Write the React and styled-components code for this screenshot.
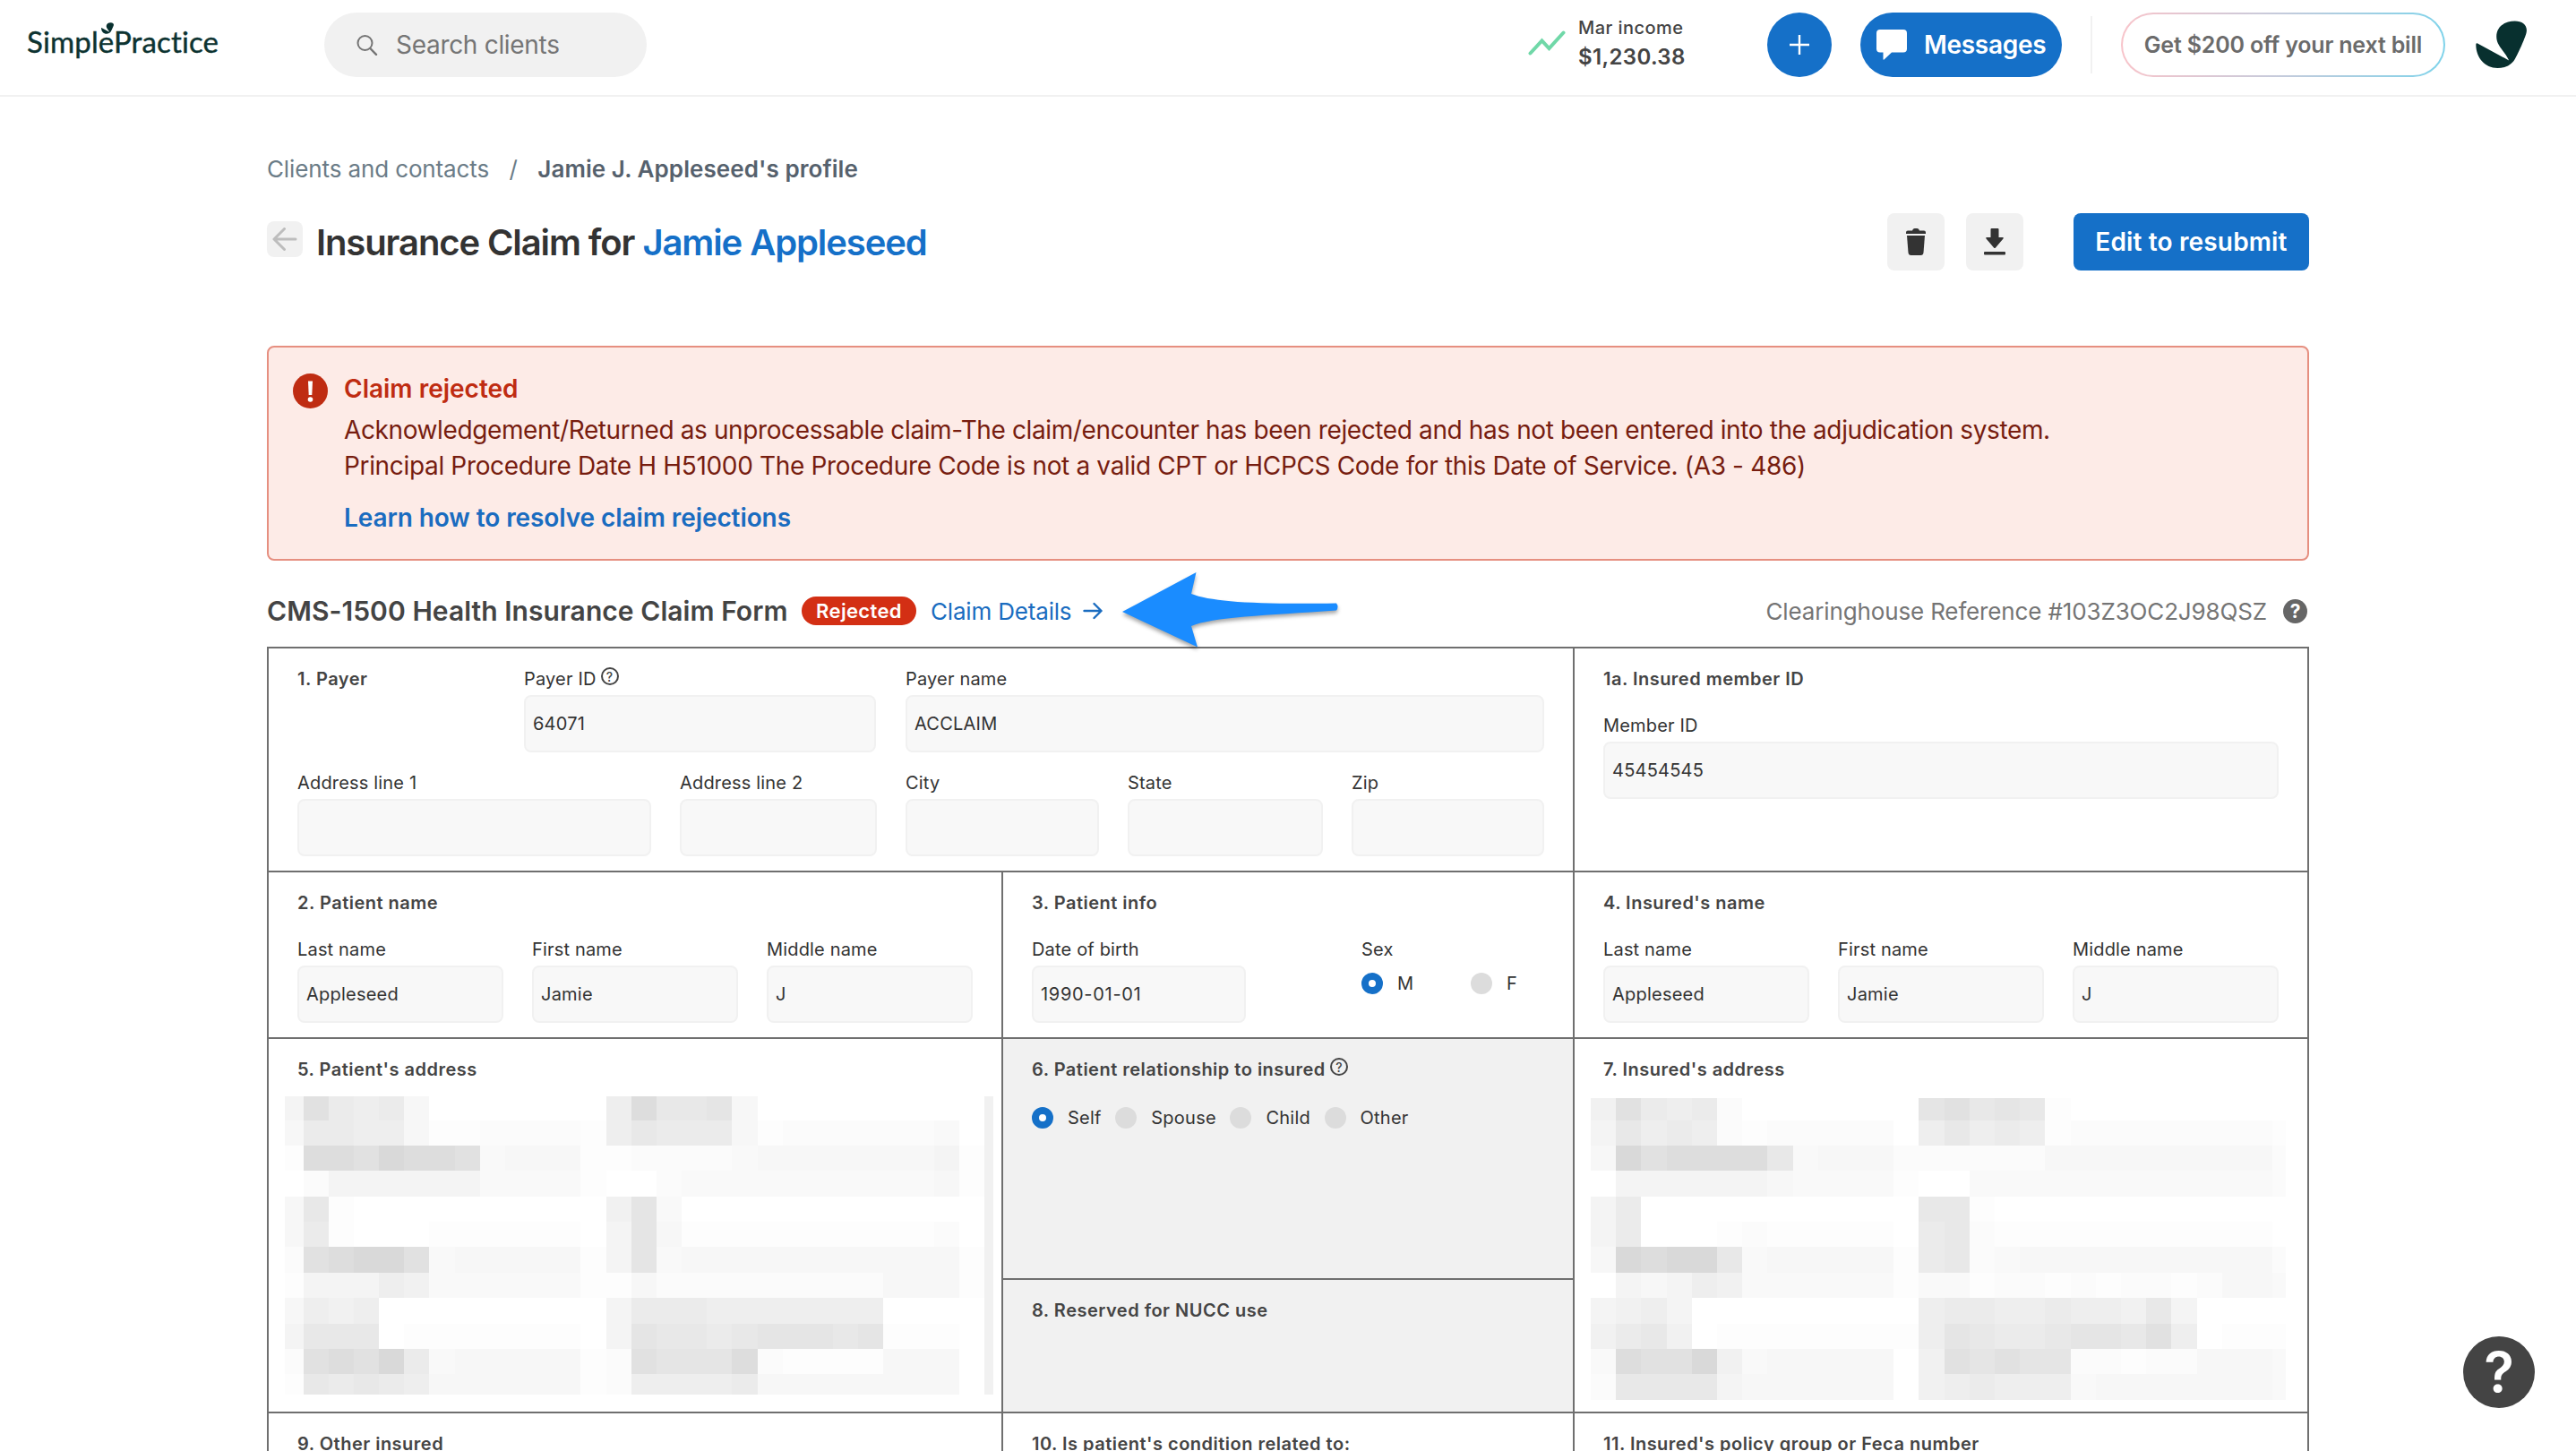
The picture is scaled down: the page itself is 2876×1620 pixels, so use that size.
import React from 'react'
import styled, { createGlobalStyle } from 'styled-components'

const patientAddress = [
  "ekhghd.......gliijd.........f",
  "dhhggdaabbbbagihhhdabbbbbbc.f",
  "allkmllkcdddaabbbbcdddddddeaf",
  ".beeeeeecccca..bccccccccccdaf",
  "dia..........fjc............f",
  "dha...aaaaaa.ejdaaaaaaaaaab.f",
  "bklmmkcdddddaejcdddddddddddaf",
  "aeeegfccccccaadbbbbbbbbbdddaf",
  "dgfg.........ehhhggggggg....f",
  "eiii.aaaaaaa.ejiihijjjijaaa.f",
  "bklkmhcdddddabkjjjlbaaaaddd.f",
  "aihihgddddddabgggghdddddddd.f",
];

const insuredAddress = [
  "fkhghb.......jkijia.........",
  "eighgbabbbbb.gighgabbbbbbbba",
  "dmkllllicdddbbbbbbdddddddddb",
  ".eeeeeedcccca..ccccccccccccb",
  "eh...........iia............",
  "eh...abaaaaa.hibaaaaaaaaaaa.",
  "dmlmmicdddddahibcddddddddddb",
  ".edegfccccccaccabbababbabddc",
  "efge.........ghhgghggfie....",
  "fhif.aaaaaaaagjihhijjikg.aaa",
  "clkkmfcddddd.fkjkjjbbabbdddc",
  "biiiiedddddd.fghgggcdddddddc",
];

const tones = {
  ".": "#ffffff",
  a: "#fdfdfd",
  b: "#fbfbfb",
  c: "#f9f9f9",
  d: "#f7f7f7",
  e: "#f4f4f4",
  f: "#f1f1f1",
  g: "#eeeeee",
  h: "#ebebeb",
  i: "#e8e8e8",
  j: "#e5e5e5",
  k: "#e1e1e1",
  l: "#dddddd",
  m: "#d9d9d9",
};

const Field = ({ label, value, help, track }) => {
  return (
    <div>
      <Label>
        {label}
        {help && <HelpRing />}
      </Label>
      <Input $track={track}>{value}</Input>
    </div>
  );
}

const HelpRing = () => {
  return <Ring>?</Ring>;
}

const Option = ({ label, checked, width }) => {
  return (
    <Choice $width={width}>
      <Radio $checked={checked} />
      {label}
    </Choice>
  );
}

const Redacted = ({ rows, columns, heights, top }) => {
  return (
    <Mosaic $columns={columns} $heights={heights} $top={top}>
      {rows.map((row, y) =>
        row.split("").map((tone, x) => <Tile key={`${y}-${x}`} $tone={tones[tone]} />)
      )}
    </Mosaic>
  );
}

const Leaf = ({ width, height }) => {
  return (
    <svg width={width} height={height} viewBox="0 0 56 54" preserveAspectRatio="none">
      <path
        fill="#08302f"
        d="M36.5 44.5C31 33 22.8 28 22.8 18C22.8 7 31 .6 43 .6C52 .6 57.5 6 55.5 14C54 20 46 38 43 43C39 50 32 53 24 53C10 53 .3 41 .3 27C.3 25 1.5 25 3 26Z"
      />
    </svg>
  );
}

const Header = () => {
  return (
    <Bar>
      <Logo>
        SimplePractice
        <LogoLeaf><Leaf width={14} height={13} /></LogoLeaf>
      </Logo>
      <Search>
        <svg width="24" height="24" viewBox="0 0 24 24" fill="none" stroke="#757575" strokeWidth="2">
          <circle cx="9.5" cy="10" r="8" />
          <path d="M15.3 16L22 22.8" strokeWidth="2.4" strokeLinecap="round" />
        </svg>
        Search clients
      </Search>
      <Tools>
        <Income>
          <svg width="42" height="28" viewBox="0 0 42 28" fill="none" stroke="#70d8a8" strokeWidth="4">
            <path d="M2.500 25.500L15.500 11.500L23.500 20L39.500 2.500" strokeLinejoin="miter" strokeLinecap="round" />
          </svg>
          <div>
            <Month>Mar income</Month>
            <Amount>$1,230.38</Amount>
          </div>
        </Income>
        <AddButton>
          <svg width="22" height="22" viewBox="0 0 22 22" stroke="#fff" strokeWidth="2.4">
            <path d="M11 0V22M0 11H22" />
          </svg>
        </AddButton>
        <Messages>
          <svg width="34" height="34" viewBox="0 0 34 34" fill="#fff">
            <path d="M4 0H30Q34 0 34 4V21.500Q34 25.500 30 25.500H17L8.500 33.500Q7.500 34 7.500 33V25.500H4Q0 25.500 0 21.500V4Q0 0 4 0Z" />
          </svg>
          Messages
        </Messages>
        <Divider />
        <Offer>Get $200 off your next bill</Offer>
        <Leaf width={57} height={54} />
      </Tools>
    </Bar>
  );
}

const App = () => {
  return (
    <Page>
      <GlobalStyle />
      <Header />
      <Main>
        <Crumbs>
          <span>Clients and contacts</span>
          <span>/</span>
          <b>Jamie J. Appleseed's profile</b>
        </Crumbs>

        <TitleRow>
          <Back>
            <svg width="28" height="26" viewBox="0 0 28 26" fill="none" stroke="#bdbdbd" strokeWidth="3" strokeLinecap="round" strokeLinejoin="round">
              <path d="M26 13H2M13.500 1.500L2 13L13.500 24.500" />
            </svg>
          </Back>
          <h1>
            Insurance Claim for <span>Jamie Appleseed</span>
          </h1>
          <Actions>
            <IconButton>
              <svg width="24" height="30" viewBox="0 0 24 30" fill="#333">
                <path d="M8 2.500Q8.500 0 10.500 0H13.500Q15.500 0 16 2.500H21Q23 2.500 23 4.500V6H1V4.500Q1 2.500 3 2.500Z" />
                <path d="M2 8H22L20.500 27Q20.200 30 17.500 30H6.500Q3.800 30 3.500 27Z" />
              </svg>
            </IconButton>
            <IconButton>
              <svg width="24" height="30" viewBox="0 0 24 30" fill="#333">
                <path d="M8.500 0H15.500Q16.500 0 16.500 1V10H21Q22.500 10 21.500 11.500L13 21.500Q12 22.500 11 21.500L2.500 11.500Q1.500 10 3 10H7.500V1Q7.500 0 8.500 0Z" />
                <rect x="0" y="26" width="24" height="3.600" rx="1" />
              </svg>
            </IconButton>
            <Primary>Edit to resubmit</Primary>
          </Actions>
        </TitleRow>

        <Alert>
          <svg width="39" height="39" viewBox="0 0 39 39">
            <circle cx="19.5" cy="19.5" r="19.5" fill="#bf2c12" />
            <path d="M17 8.500H22L21.300 24H17.700Z" fill="#fff" />
            <circle cx="19.5" cy="29" r="2.800" fill="#fff" />
          </svg>
          <div>
            <h3>Claim rejected</h3>
            <AlertLine $track={-0.385}>
              Acknowledgement/Returned as unprocessable claim-The claim/encounter has been rejected and has not been entered into the adjudication system.
            </AlertLine>
            <AlertLine $track={-0.34}>
              Principal Procedure Date H H51000 The Procedure Code is not a valid CPT or HCPCS Code for this Date of Service. (A3 - 486)
            </AlertLine>
            <AlertLink>Learn how to resolve claim rejections</AlertLink>
          </div>
        </Alert>

        <FormHead>
          <h2>CMS-1500 Health Insurance Claim Form</h2>
          <Badge>Rejected</Badge>
          <Details>
            Claim Details
            <svg width="22" height="20" viewBox="0 0 22 20" fill="none" stroke="#1a6cc0" strokeWidth="2.400" strokeLinecap="round" strokeLinejoin="round">
              <path d="M1.500 10H20.500M12.500 2L20.500 10L12.500 18" />
            </svg>
          </Details>
          <Reference>
            Clearinghouse Reference #103Z3OC2J98QSZ
            <HelpDot>?</HelpDot>
          </Reference>
          <Pointer>
            <svg width="250" height="100" viewBox="0 0 250 100">
              <path
                fill="#1a8cff"
                d="M0 45L82.500 1L77 25C100 34 150 37 239 35.500Q242 39.500 239 43.500C160 49 100 51 77 61L84 84.500Z"
              />
            </svg>
          </Pointer>
        </FormHead>

        <Form>
          <Cell $span={2}>
            <Fields $columns="220px 393px 713px" $gap={33}>
              <SectionTitle>1. Payer</SectionTitle>
              <Field label="Payer ID" value="64071" help />
              <Field label="Payer name" value="ACCLAIM" />
            </Fields>
            <Fields $columns="395px 220px 216px 218px 215px" $top={22}>
              <Field label="Address line 1" />
              <Field label="Address line 2" />
              <Field label="City" />
              <Field label="State" />
              <Field label="Zip" />
            </Fields>
          </Cell>
          <Cell>
            <SectionTitle>1a. Insured member ID</SectionTitle>
            <Fields $columns="1fr" $top={28}>
              <Field label="Member ID" value="45454545" />
            </Fields>
          </Cell>

          <Cell>
            <SectionTitle>2. Patient name</SectionTitle>
            <Fields $columns="repeat(3, 1fr)" $top={28}>
              <Field label="Last name" value="Appleseed" />
              <Field label="First name" value="Jamie" />
              <Field label="Middle name" value="J" />
            </Fields>
          </Cell>
          <Cell>
            <SectionTitle>3. Patient info</SectionTitle>
            <Fields $columns="239px 1fr" $gap={129} $top={28}>
              <Field label="Date of birth" value="1990-01-01" track={0.7} />
              <div>
                <Label>Sex</Label>
                <Options $top={14} $gap={0}>
                  <Option label="M" width={122} checked />
                  <Option label="F" />
                </Options>
              </div>
            </Fields>
          </Cell>
          <Cell>
            <SectionTitle>4. Insured's name</SectionTitle>
            <Fields $columns="repeat(3, 1fr)" $top={28}>
              <Field label="Last name" value="Appleseed" />
              <Field label="First name" value="Jamie" />
              <Field label="Middle name" value="J" />
            </Fields>
          </Cell>

          <Cell $rows={2}>
            <SectionTitle>5. Patient's address</SectionTitle>
            <Redacted
              rows={patientAddress}
              columns="20.7px repeat(27, 28.17px) 10px"
              heights="26.7px repeat(10, 28.37px) 22.7px"
              top={18}
            />
          </Cell>
          <Cell $muted>
            <SectionTitle>
              6. Patient relationship to insured
              <HelpRing />
            </SectionTitle>
            <Options $top={30} $gap={15.5}>
              <Option label="Self" checked />
              <Option label="Spouse" />
              <Option label="Child" />
              <Option label="Other" />
            </Options>
          </Cell>
          <Cell $rows={2}>
            <SectionTitle>7. Insured's address</SectionTitle>
            <Redacted
              rows={insuredAddress}
              columns="repeat(27, 28.2px) 15px"
              heights="24.7px repeat(10, 28.37px) 28.7px"
              top={20}
            />
          </Cell>
          <Cell $muted>
            <SectionTitle>8. Reserved for NUCC use</SectionTitle>
          </Cell>

          <Cell>
            <SectionTitle>9. Other insured</SectionTitle>
          </Cell>
          <Cell>
            <SectionTitle>10. Is patient's condition related to:</SectionTitle>
          </Cell>
          <Cell>
            <SectionTitle>11. Insured's policy group or Feca number</SectionTitle>
          </Cell>
        </Form>
      </Main>
      <HelpButton>?</HelpButton>
    </Page>
  );
}

const GlobalStyle = createGlobalStyle`
  * {
    box-sizing: border-box;
  }
  body {
    margin: 0;
    background: #fff;
    font-family: Inter, "Liberation Sans", sans-serif;
  }
  h1, h2, h3 {
    margin: 0;
    font-weight: 600;
  }
  svg {
    display: block;
    flex-shrink: 0;
  }
`;

const Page = styled.div`
  position: relative;
  width: 2876px;
  height: 1620px;
  overflow: hidden;
`;

const Bar = styled.header`
  display: flex;
  align-items: center;
  height: 108px;
  padding: 0 55px 6px 30px;
  border-bottom: 2px solid #f1f1f1;
`;

const Logo = styled.div`
  position: relative;
  width: 332px;
  padding-bottom: 8px;
  font-family: Lato, sans-serif;
  font-size: 33px;
  letter-spacing: 0.15px;
  line-height: 40px;
  color: #0d3331;
  -webkit-text-stroke: 0.4px #0d3331;
`;

const LogoLeaf = styled.span`
  position: absolute;
  left: 83px;
  top: -1px;
`;

const Search = styled.div`
  display: flex;
  align-items: center;
  gap: 20px;
  width: 360px;
  height: 72px;
  padding-left: 36px;
  border-radius: 36px;
  background: #f1f1f1;
  color: #757575;
  font-size: 28px;
  letter-spacing: -0.3px;
`;

const Tools = styled.div`
  display: flex;
  align-items: center;
  margin-left: auto;
`;

const Income = styled.div`
  display: flex;
  align-items: center;
  gap: 14px;
  width: 267px;
  padding-bottom: 4px;
  color: #444;
`;

const Month = styled.div`
  font-size: 20px;
  font-weight: 500;
  line-height: 32px;
  letter-spacing: 0.45px;
`;

const Amount = styled.div`
  font-size: 24px;
  font-weight: 600;
  line-height: 34px;
  letter-spacing: 0.35px;
`;

const AddButton = styled.div`
  display: flex;
  align-items: center;
  justify-content: center;
  width: 72px;
  height: 72px;
  border-radius: 50%;
  background: #1570c8;
`;

const Messages = styled.div`
  display: flex;
  align-items: center;
  gap: 19px;
  width: 225px;
  height: 72px;
  margin-left: 32px;
  padding-left: 18px;
  border-radius: 36px;
  background: #1570c8;
  color: #fff;
  font-size: 28px;
  font-weight: 600;
  letter-spacing: -0.3px;
`;

const Divider = styled.div`
  width: 2px;
  height: 64px;
  margin: 0 32px;
  background: #f1f1f1;
`;

const Offer = styled.div`
  display: flex;
  align-items: center;
  justify-content: center;
  width: 362px;
  height: 72px;
  margin-right: 34px;
  border: 2px solid transparent;
  border-radius: 36px;
  background:
    linear-gradient(#fff, #fff) padding-box,
    linear-gradient(90deg, #f8c4ca, #c4cbdc 50%, #7fd3ea) border-box;
  color: #6b6b6b;
  font-size: 25px;
  font-weight: 600;
  letter-spacing: -0.18px;
`;

const Main = styled.main`
  width: 2280px;
  margin: 0 298px;
  padding-top: 65px;
`;

const Crumbs = styled.nav`
  display: flex;
  gap: 22.5px;
  font-size: 26px;
  line-height: 32px;
  letter-spacing: -0.12px;
  color: #6b7c87;
  b {
    font-weight: 600;
    letter-spacing: 0.07px;
    color: #56616d;
  }
`;

const TitleRow = styled.div`
  display: flex;
  align-items: center;
  height: 64px;
  margin-top: 33px;
  h1 {
    margin-left: 15px;
    font-size: 40px;
    letter-spacing: -1.1px;
    color: #333;
  }
  h1 span {
    color: #1570c8;
  }
`;

const Back = styled.div`
  display: flex;
  align-items: center;
  justify-content: center;
  width: 40px;
  height: 40px;
  margin-bottom: 6px;
  border-radius: 8px;
  background: #f1f1f1;
`;

const Actions = styled.div`
  display: flex;
  margin-left: auto;
`;

const IconButton = styled.div`
  display: flex;
  align-items: center;
  justify-content: center;
  width: 64px;
  height: 64px;
  margin-right: 24px;
  border-radius: 8px;
  background: #f1f1f1;
`;

const Primary = styled.div`
  width: 263px;
  height: 64px;
  margin-left: 32px;
  border-radius: 8px;
  background: #1570c8;
  color: #fff;
  font-size: 28px;
  font-weight: 600;
  line-height: 64px;
  letter-spacing: 0.15px;
  text-align: center;
`;

const Alert = styled.section`
  display: flex;
  gap: 18px;
  height: 240px;
  margin-top: 84px;
  padding: 26px 0 0 27px;
  border: 2px solid #e68f80;
  border-radius: 8px;
  background: #fdebe7;
  font-size: 28px;
  line-height: 40px;
  svg {
    margin-top: 3px;
  }
  h3 {
    margin-bottom: 6px;
    font-size: 28px;
    color: #bf2c12;
  }
`;

const AlertLine = styled.div`
  color: #771d10;
  white-space: nowrap;
  letter-spacing: ${(p) => p.$track}px;
`;

const AlertLink = styled.div`
  margin-top: 18px;
  font-weight: 600;
  letter-spacing: -0.09px;
  color: #1a6cc0;
`;

const FormHead = styled.div`
  position: relative;
  display: flex;
  align-items: center;
  height: 32px;
  margin: 40px 0 24px;
  h2 {
    width: 597px;
    font-size: 30px;
    letter-spacing: 0.05px;
    white-space: nowrap;
    color: #444;
  }
`;

const Badge = styled.div`
  width: 128px;
  height: 32px;
  border-radius: 16px;
  background: #d32f14;
  color: #fff;
  font-size: 22px;
  font-weight: 600;
  line-height: 32px;
  letter-spacing: 0.35px;
  text-align: center;
`;

const Details = styled.div`
  display: flex;
  align-items: center;
  gap: 13px;
  margin-left: 16px;
  font-size: 26px;
  letter-spacing: -0.18px;
  color: #1a6cc0;
`;

const Reference = styled.div`
  display: flex;
  align-items: center;
  gap: 18px;
  margin-left: auto;
  padding-right: 2px;
  font-size: 26px;
  letter-spacing: -0.14px;
  color: #757575;
`;

const HelpDot = styled.span`
  width: 27px;
  height: 27px;
  border-radius: 50%;
  background: #666;
  color: #fff;
  font-size: 21px;
  font-weight: 700;
  line-height: 27px;
  text-align: center;
`;

const Pointer = styled.div`
  position: absolute;
  left: 955px;
  top: -28px;
  z-index: 1;
  filter: drop-shadow(0 3px 2px rgba(0, 0, 0, 0.35));
`;

const Form = styled.div`
  display: grid;
  grid-template-columns: 818px 636px 818px;
  grid-template-rows: 248px 184px 267px 147px 200px;
  gap: 2px;
  border: 2px solid #6f6f6f;
  background: #6f6f6f;
`;

const Cell = styled.div`
  grid-column: span ${(p) => p.$span || 1};
  grid-row: span ${(p) => p.$rows || 1};
  padding: 22px 32px 0;
  background: ${(p) => (p.$muted ? "#f1f1f1" : "#fff")};
`;

const Fields = styled.div`
  display: grid;
  grid-template-columns: ${(p) => p.$columns};
  column-gap: ${(p) => p.$gap || 32}px;
  margin-top: ${(p) => p.$top || 0}px;
`;

const SectionTitle = styled.div`
  display: flex;
  font-size: 20px;
  font-weight: 600;
  line-height: 24px;
  letter-spacing: 0.49px;
  color: #444;
`;

const Label = styled.div`
  display: flex;
  font-size: 20px;
  line-height: 24px;
  letter-spacing: 0.17px;
  color: #333;
`;

const Input = styled.div`
  height: 64px;
  margin-top: 6px;
  padding-left: 8px;
  border: 2px solid #f1f1f1;
  border-radius: 8px;
  background: #f8f8f8;
  color: #333;
  font-size: 20px;
  line-height: 60px;
  letter-spacing: ${(p) => p.$track || 0.22}px;
`;

const Ring = styled.span`
  width: 20px;
  height: 20px;
  margin: -1px 0 0 5px;
  border: 2px solid #444;
  border-radius: 50%;
  font-size: 14px;
  font-weight: 500;
  line-height: 17px;
  letter-spacing: 0;
  text-align: center;
  color: #444;
`;

const Options = styled.div`
  display: flex;
  gap: ${(p) => p.$gap}px;
  margin-top: ${(p) => p.$top}px;
`;

const Choice = styled.div`
  display: flex;
  align-items: center;
  gap: 16px;
  width: ${(p) => (p.$width ? `${p.$width}px` : "auto")};
  font-size: 20px;
  line-height: 24px;
  letter-spacing: 0.25px;
  color: #333;
`;

const Radio = styled.span`
  width: 24px;
  height: 24px;
  border-radius: 50%;
  border: ${(p) => (p.$checked ? "8px solid #1570c8" : "0")};
  background: ${(p) => (p.$checked ? "#fff" : "#dcdcdc")};
`;

const Mosaic = styled.div`
  display: grid;
  grid-template-columns: ${(p) => p.$columns};
  grid-template-rows: ${(p) => p.$heights};
  margin: ${(p) => p.$top}px 0 0 -14px;
`;

const Tile = styled.span`
  background: ${(p) => p.$tone};
`;

const HelpButton = styled.div`
  position: absolute;
  left: 2750px;
  top: 1492px;
  width: 80px;
  height: 80px;
  border-radius: 50%;
  background: #444;
  color: #fff;
  font-size: 62px;
  font-weight: 600;
  line-height: 80px;
  text-align: center;
`;

export default App
